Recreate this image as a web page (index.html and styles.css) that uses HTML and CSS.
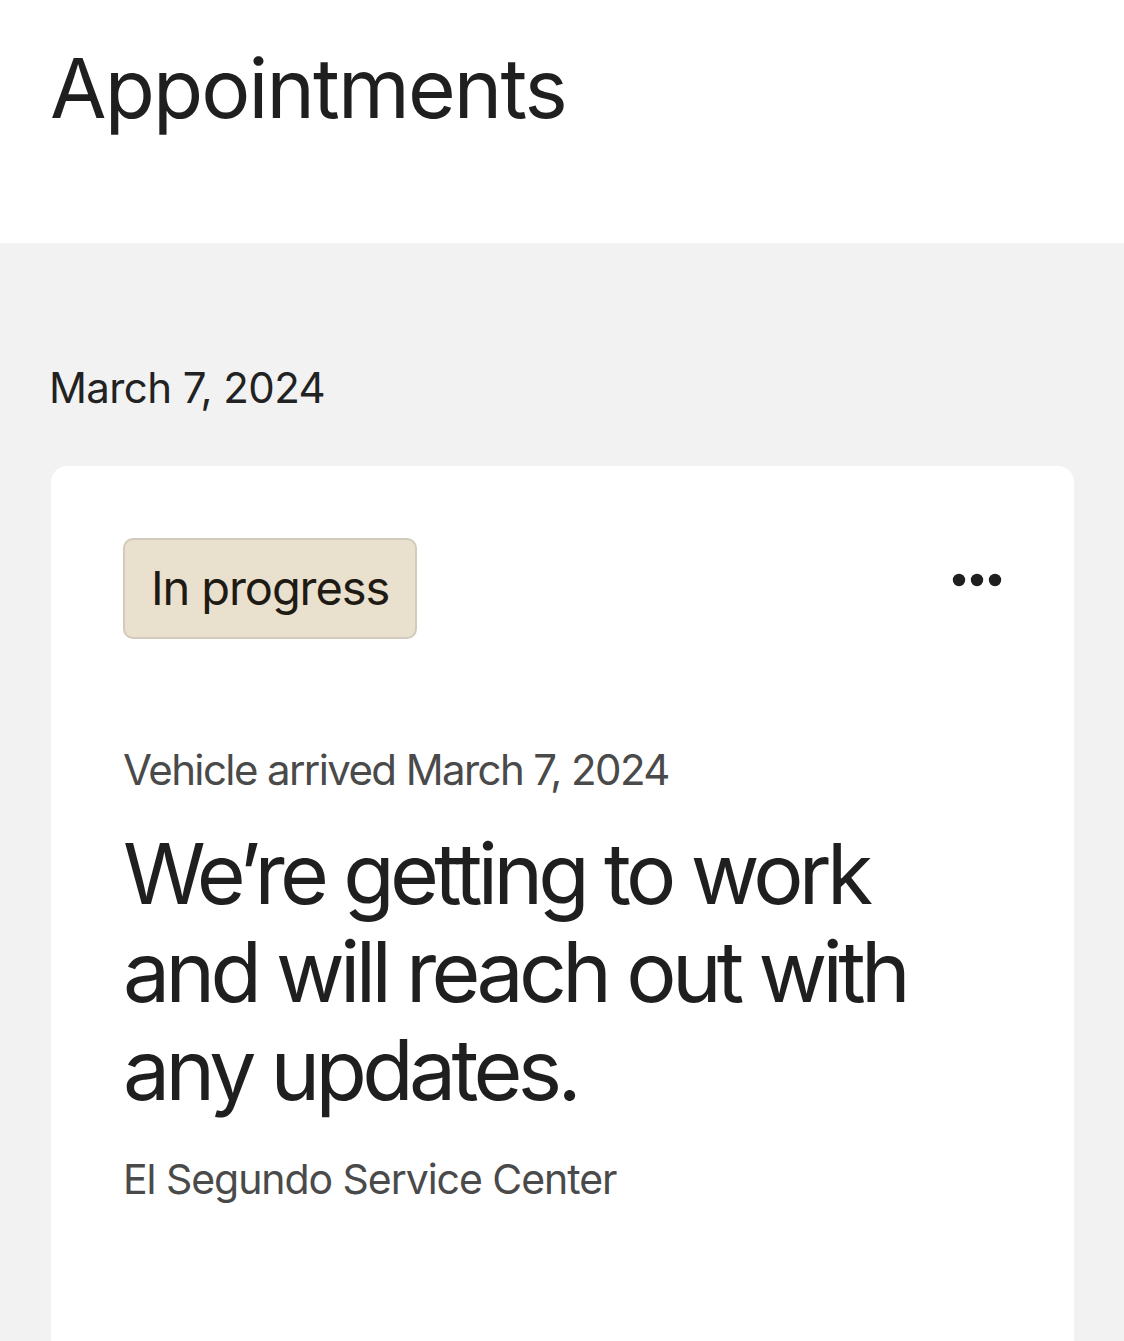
FILE: index.html
```html
<!DOCTYPE html>
<html lang="en">
<head>
<meta charset="utf-8">
<title>Appointments</title>
<link rel="stylesheet" href="styles.css">
</head>
<body>
  <header class="page-header">
    <h1 class="page-title">Appointments</h1>
  </header>
  <main class="content">
    <div class="date-label">March 7, 2024</div>
    <section class="card">
      <div class="card-top">
        <span class="badge">In progress</span>
        <button class="more" aria-label="More options">
          <svg width="50" height="14" viewBox="0 0 50 14" aria-hidden="true">
            <circle cx="7" cy="7" r="6.2" fill="#1f1f1f"/>
            <circle cx="25" cy="7" r="6.2" fill="#1f1f1f"/>
            <circle cx="43" cy="7" r="6.2" fill="#1f1f1f"/>
          </svg>
        </button>
      </div>
      <p class="meta">Vehicle arrived March 7, 2024</p>
      <h2 class="headline">We’re getting to work and will reach out with any updates.</h2>
      <p class="location">El Segundo Service Center</p>
    </section>
  </main>
</body>
</html>
```

FILE: styles.css
```css
* { box-sizing: border-box; }

html, body {
  margin: 0;
  padding: 0;
}

body {
  font-family: Inter, "Noto Sans", "Liberation Sans", sans-serif;
  color: #1f1f1f;
  background: #f2f2f2;
  overflow: hidden;
}

.page-header {
  background: #ffffff;
  height: 243px;
  padding: 48px 50px 0;
}

.page-title {
  margin: 0;
  font-size: 82px;
  font-weight: 400;
  line-height: 1;
  letter-spacing: -1.9px;
  color: #1f1f1f;
}

.content {
  padding: 124px 50px 0 51px;
}

.date-label {
  font-size: 42px;
  line-height: 1;
  color: #222222;
  margin-left: -2px;
  letter-spacing: -0.6px;
}

.card {
  margin-top: 57px;
  background: #ffffff;
  border-radius: 16px;
  padding: 72px 72px 200px;
  min-height: 900px;
}

.card-top {
  display: flex;
  justify-content: space-between;
  align-items: flex-start;
}

.badge {
  display: inline-flex;
  align-items: center;
  height: 101px;
  padding: 0 26px 2px;
  background: #e9e0cd;
  border: 2px solid #d2cbbd;
  border-radius: 10px;
  font-size: 47px;
  color: #1e1a14;
  letter-spacing: -1.1px;
}

.more {
  border: 0;
  background: transparent;
  padding: 0;
  margin: 35px 0 0;
  width: 50px;
  height: 14px;
  display: flex;
  cursor: pointer;
}

.meta {
  margin: 105px 0 0;
  font-size: 42px;
  line-height: 52px;
  color: #4a4a4a;
  letter-spacing: -1.6px;
}

.headline {
  margin: 29px 0 0;
  font-size: 84px;
  font-weight: 400;
  line-height: 98px;
  letter-spacing: -4.7px;
  color: #1f1f1f;
  max-width: 800px;
}

.location {
  margin: 34px 0 0;
  font-size: 41px;
  line-height: 52px;
  color: #4a4a4a;
  letter-spacing: -1.05px;
}
```
